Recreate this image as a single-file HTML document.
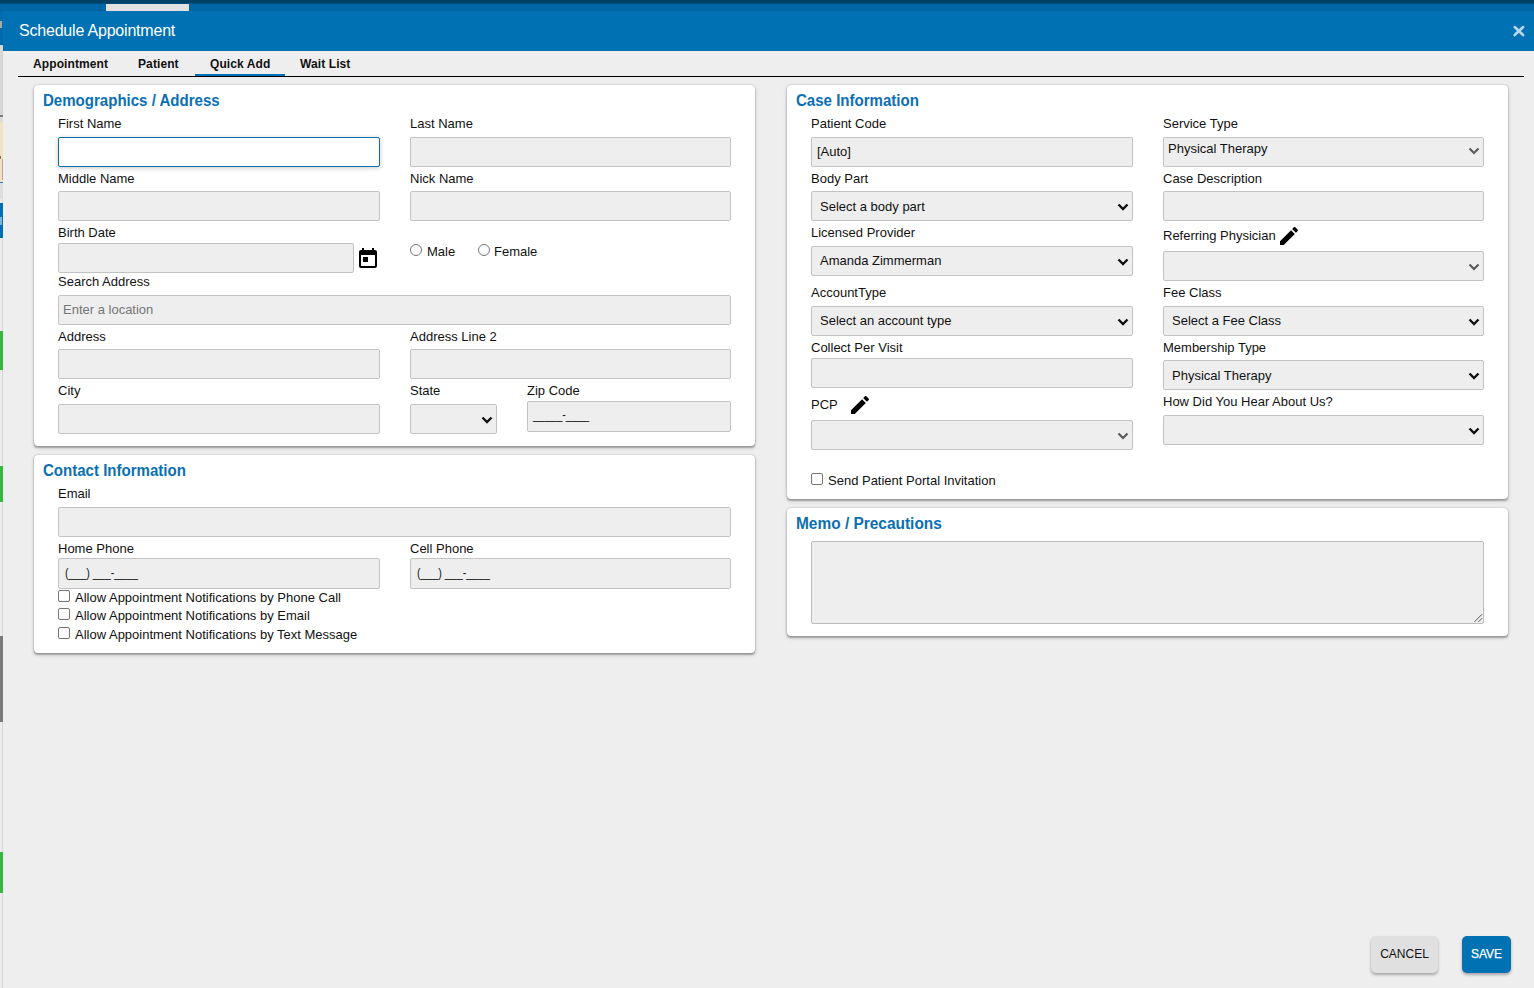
<!DOCTYPE html>
<html><head><meta charset="utf-8">
<style>
*{box-sizing:border-box;margin:0;padding:0}
html,body{width:1534px;height:988px;overflow:hidden;background:#eeeeee;font-family:"Liberation Sans",sans-serif;color:#212121}
.a{position:absolute}
#topbar{left:0;top:0;width:1534px;height:11px;background:linear-gradient(#014166 0,#024367 3px,#0064a2 4.5px,#0068a8 6px,#0067a6 9.5px,#0063a0 10.5px,#0063a0 11px)}
#toptab{left:106px;top:4px;width:83px;height:7px;background:#e2e2e2}
#strip{left:0;top:11px;width:3px;height:977px;background:#dcdcdc}
#hdr{left:3px;top:11px;width:1531px;height:40px;background:#0071b3}
#title{left:19px;top:21px;font-size:16px;color:#fff;line-height:20px;letter-spacing:-0.2px}
#close{left:1511px;top:22px;width:14px;height:16px}
.tab{top:56px;font-size:12px;font-weight:bold;color:#111;line-height:16px;letter-spacing:0.1px}
#tabline{left:18px;top:76px;width:1506px;height:1px;background:#000}
#tabact{left:195px;top:74px;width:90px;height:2px;background:#0071b3}
.panel{background:#fff;border-radius:4px;box-shadow:0 0 1.5px rgba(0,0,0,.36),0 2px 4px rgba(0,0,0,.16),0 2px 1.5px -0.5px rgba(0,0,0,.22)}
.h{font-size:16px;font-weight:bold;color:#0a6fb4;line-height:18px;transform:scaleX(.94);transform-origin:0 0}
.lb{font-size:13px;color:#111;line-height:16px;white-space:nowrap}
.in,.sel{background:#eeeeee;border:1px solid #c3c3c3;border-radius:2px}
.txt{position:absolute;font-size:13px;color:#111;line-height:16px;white-space:nowrap}
.cb{width:12px;height:12px;border:1px solid #767676;border-radius:2px;background:#fff}
.rd{width:12px;height:12px;border:1px solid #767676;border-radius:50%;background:#fff}
.btn{font-size:12px;line-height:16px;text-align:center;border-radius:5px;box-shadow:0 2px 3px rgba(0,0,0,.3)}
</style></head><body>
<div class="a" id="topbar"></div>
<div class="a" id="toptab"></div>
<div class="a" style="left:0;top:11px;width:3px;height:977px;background:#ececec;box-shadow:inset -1px 0 0 #d8d8d8"></div>
<div class="a" style="left:0;top:11px;width:3px;height:34px;background:#006bac"></div>
<div class="a" style="left:0;top:21px;width:2px;height:7px;background:#e6c9a8;opacity:.7"></div>
<div class="a" style="left:0;top:45px;width:3px;height:70px;background:linear-gradient(90deg,#d8d8d8,#d8d8d8 2px,#cccccc 3px)"></div>
<div class="a" style="left:0;top:115px;width:3px;height:2px;background:#7c7c7c"></div>
<div class="a" style="left:0;top:117px;width:3px;height:5px;background:#dcdcdc"></div>
<div class="a" style="left:0;top:122px;width:3px;height:61px;background:#efe3c2"></div>
<div class="a" style="left:2px;top:159px;width:1px;height:21px;background:#d39b9b"></div>
<div class="a" style="left:0;top:156px;width:1px;height:3px;background:#8a6a50"></div>
<div class="a" style="left:0;top:182px;width:3px;height:1px;background:#2f78c0"></div>
<div class="a" style="left:0;top:183px;width:3px;height:16px;background:#dedede"></div>
<div class="a" style="left:0;top:203px;width:3px;height:35px;background:#0070b3"></div>
<div class="a" style="left:0;top:217px;width:2px;height:8px;background:#cfe3f0;opacity:.6"></div>
<div class="a" style="left:0;top:331px;width:3px;height:39px;background:#36b83c"></div>
<div class="a" style="left:0;top:466px;width:3px;height:36px;background:#36b83c"></div>
<div class="a" style="left:0;top:636px;width:3px;height:86px;background:#7a7a7a"></div>
<div class="a" style="left:0;top:852px;width:3px;height:41px;background:#36b83c"></div>
<div class="a" id="hdr"></div>
<div class="a" id="title">Schedule Appointment</div>
<svg class="a" style="left:1512px;top:24px;width:14px;height:14px" viewBox="0 0 14 14"><path d="M2.7 3.1L11.1 11.1M11.1 3.1L2.7 11.1" stroke="#b7d6ea" stroke-width="2.7" stroke-linecap="round"/></svg>
<div class="a tab" style="left:33px">Appointment</div>
<div class="a tab" style="left:138px">Patient</div>
<div class="a tab" style="left:210px">Quick Add</div>
<div class="a tab" style="left:300px">Wait List</div>
<div class="a" id="tabline"></div>
<div class="a" id="tabact"></div>
<div class="a panel" style="left:34px;top:85px;width:721px;height:361px"></div>
<div class="a h" style="left:43px;top:92px">Demographics / Address</div>
<div class="a panel" style="left:34px;top:455px;width:721px;height:198px"></div>
<div class="a h" style="left:43px;top:462px">Contact Information</div>
<div class="a panel" style="left:787px;top:85px;width:721px;height:414px"></div>
<div class="a h" style="left:796px;top:92px">Case Information</div>
<div class="a panel" style="left:787px;top:508px;width:721px;height:128px"></div>
<div class="a h" style="left:796px;top:515px;transform:scaleX(.965)">Memo / Precautions</div>
<div class="a lb" style="left:58px;top:116px;">First Name</div>
<div class="a lb" style="left:410px;top:116px;">Last Name</div>
<div class="a" style="left:58px;top:137px;width:322px;height:30px;background:#fff;border:1px solid #0a6fb0;border-radius:2px;box-shadow:0 1px 5px rgba(0,0,0,.22)"></div>
<div class="a in" style="left:410px;top:137px;width:321px;height:30px;"></div>
<div class="a lb" style="left:58px;top:171px;">Middle Name</div>
<div class="a lb" style="left:410px;top:171px;">Nick Name</div>
<div class="a in" style="left:58px;top:191px;width:322px;height:30px;"></div>
<div class="a in" style="left:410px;top:191px;width:321px;height:30px;"></div>
<div class="a lb" style="left:58px;top:225px;">Birth Date</div>
<div class="a in" style="left:58px;top:243px;width:296px;height:30px;"></div>
<svg class="a" style="left:356px;top:247px;width:24px;height:24px" viewBox="0 0 24 24"><path d="M19 3h-1V1h-2v2H8V1H6v2H5c-1.11 0-1.99.9-1.99 2L3 19c0 1.1.89 2 2 2h14c1.1 0 2-.9 2-2V5c0-1.1-.9-2-2-2zm0 16H5V8h14v11zM7 10h5v5H7z" fill="#000"/></svg>
<div class="a rd" style="left:410px;top:244px"></div>
<div class="a lb" style="left:427px;top:244px;">Male</div>
<div class="a rd" style="left:478px;top:244px"></div>
<div class="a lb" style="left:494px;top:244px;">Female</div>
<div class="a lb" style="left:58px;top:274px;">Search Address</div>
<div class="a in" style="left:58px;top:295px;width:673px;height:30px;"><div class="txt" style="left:4px;top:6px;color:#757575">Enter a location</div></div>
<div class="a lb" style="left:58px;top:329px;">Address</div>
<div class="a lb" style="left:410px;top:329px;">Address Line 2</div>
<div class="a in" style="left:58px;top:349px;width:322px;height:30px;"></div>
<div class="a in" style="left:410px;top:349px;width:321px;height:30px;"></div>
<div class="a lb" style="left:58px;top:383px;">City</div>
<div class="a lb" style="left:410px;top:383px;">State</div>
<div class="a lb" style="left:527px;top:383px;">Zip Code</div>
<div class="a in" style="left:58px;top:404px;width:322px;height:30px;"></div>
<div class="a sel" style="left:410px;top:404px;width:87px;height:30px"><svg class="chev" viewBox="0 0 12 8" style="position:absolute;right:3px;top:11px;width:12px;height:8px"><path d="M1.5 1.5L6 6L10.5 1.5" fill="none" stroke="#111" stroke-width="2.4"/></svg></div>
<div class="a in" style="left:527px;top:401px;width:204px;height:31px;"><div class="txt" style="left:5px;top:5px;color:#111"><span style="display:inline-block;transform:scaleX(.81);transform-origin:0 0">_____-____</span></div></div>
<div class="a lb" style="left:58px;top:486px;">Email</div>
<div class="a in" style="left:58px;top:507px;width:673px;height:30px;"></div>
<div class="a lb" style="left:58px;top:541px;">Home Phone</div>
<div class="a lb" style="left:410px;top:541px;">Cell Phone</div>
<div class="a in" style="left:58px;top:558px;width:322px;height:31px;"><div class="txt" style="left:6px;top:6px;color:#111"><span style="display:inline-block;transform:scaleX(.82);transform-origin:0 0">(___) ___-____</span></div></div>
<div class="a in" style="left:410px;top:558px;width:321px;height:31px;"><div class="txt" style="left:6px;top:6px;color:#111"><span style="display:inline-block;transform:scaleX(.82);transform-origin:0 0">(___) ___-____</span></div></div>
<div class="a cb" style="left:58px;top:590px"></div>
<div class="a lb" style="left:75px;top:590px;">Allow Appointment Notifications by Phone Call</div>
<div class="a cb" style="left:58px;top:608px"></div>
<div class="a lb" style="left:75px;top:608px;">Allow Appointment Notifications by Email</div>
<div class="a cb" style="left:58px;top:627px"></div>
<div class="a lb" style="left:75px;top:627px;">Allow Appointment Notifications by Text Message</div>
<div class="a lb" style="left:811px;top:116px;">Patient Code</div>
<div class="a lb" style="left:1163px;top:116px;">Service Type</div>
<div class="a in" style="left:811px;top:137px;width:322px;height:30px;"><div class="txt" style="left:5px;top:6px;color:#111">[Auto]</div></div>
<div class="a sel" style="left:1163px;top:137px;width:321px;height:30px"><div class="txt" style="left:4px;top:3px">Physical Therapy</div><svg class="chev" viewBox="0 0 12 8" style="position:absolute;right:3px;top:9px;width:12px;height:8px"><path d="M1.5 1.5L6 6L10.5 1.5" fill="none" stroke="#5a5a5a" stroke-width="2.1"/></svg></div>
<div class="a lb" style="left:811px;top:171px;">Body Part</div>
<div class="a lb" style="left:1163px;top:171px;">Case Description</div>
<div class="a sel" style="left:811px;top:191px;width:322px;height:30px"><div class="txt" style="left:8px;top:7px">Select a body part</div><svg class="chev" viewBox="0 0 12 8" style="position:absolute;right:3px;top:11px;width:12px;height:8px"><path d="M1.5 1.5L6 6L10.5 1.5" fill="none" stroke="#111" stroke-width="2.4"/></svg></div>
<div class="a in" style="left:1163px;top:191px;width:321px;height:30px;"></div>
<div class="a lb" style="left:811px;top:225px;">Licensed Provider</div>
<div class="a lb" style="left:1163px;top:228px;">Referring Physician</div>
<svg class="a" style="left:1277px;top:224px;width:24px;height:24px" viewBox="0 0 24 24"><path d="M3 17.25V21h3.75L17.81 9.94l-3.75-3.75L3 17.25zM20.71 7.04c.39-.39.39-1.02 0-1.41l-2.34-2.34c-.39-.39-1.02-.39-1.41 0l-1.83 1.83 3.75 3.75 1.83-1.83z" fill="#000"/></svg>
<div class="a sel" style="left:811px;top:246px;width:322px;height:30px"><div class="txt" style="left:8px;top:6px">Amanda Zimmerman</div><svg class="chev" viewBox="0 0 12 8" style="position:absolute;right:3px;top:11px;width:12px;height:8px"><path d="M1.5 1.5L6 6L10.5 1.5" fill="none" stroke="#111" stroke-width="2.4"/></svg></div>
<div class="a sel" style="left:1163px;top:251px;width:321px;height:30px"><svg class="chev" viewBox="0 0 12 8" style="position:absolute;right:3px;top:11px;width:12px;height:8px"><path d="M1.5 1.5L6 6L10.5 1.5" fill="none" stroke="#5a5a5a" stroke-width="2.1"/></svg></div>
<div class="a lb" style="left:811px;top:285px;">AccountType</div>
<div class="a lb" style="left:1163px;top:285px;">Fee Class</div>
<div class="a sel" style="left:811px;top:306px;width:322px;height:30px"><div class="txt" style="left:8px;top:6px">Select an account type</div><svg class="chev" viewBox="0 0 12 8" style="position:absolute;right:3px;top:11px;width:12px;height:8px"><path d="M1.5 1.5L6 6L10.5 1.5" fill="none" stroke="#111" stroke-width="2.4"/></svg></div>
<div class="a sel" style="left:1163px;top:306px;width:321px;height:30px"><div class="txt" style="left:8px;top:6px">Select a Fee Class</div><svg class="chev" viewBox="0 0 12 8" style="position:absolute;right:3px;top:11px;width:12px;height:8px"><path d="M1.5 1.5L6 6L10.5 1.5" fill="none" stroke="#111" stroke-width="2.4"/></svg></div>
<div class="a lb" style="left:811px;top:340px;">Collect Per Visit</div>
<div class="a lb" style="left:1163px;top:340px;">Membership Type</div>
<div class="a in" style="left:811px;top:358px;width:322px;height:30px;"></div>
<div class="a sel" style="left:1163px;top:360px;width:321px;height:30px"><div class="txt" style="left:8px;top:7px">Physical Therapy</div><svg class="chev" viewBox="0 0 12 8" style="position:absolute;right:3px;top:11px;width:12px;height:8px"><path d="M1.5 1.5L6 6L10.5 1.5" fill="none" stroke="#111" stroke-width="2.4"/></svg></div>
<div class="a lb" style="left:811px;top:397px;">PCP</div>
<div class="a lb" style="left:1163px;top:394px;">How Did You Hear About Us?</div>
<svg class="a" style="left:848px;top:393px;width:24px;height:24px" viewBox="0 0 24 24"><path d="M3 17.25V21h3.75L17.81 9.94l-3.75-3.75L3 17.25zM20.71 7.04c.39-.39.39-1.02 0-1.41l-2.34-2.34c-.39-.39-1.02-.39-1.41 0l-1.83 1.83 3.75 3.75 1.83-1.83z" fill="#000"/></svg>
<div class="a sel" style="left:811px;top:420px;width:322px;height:30px"><svg class="chev" viewBox="0 0 12 8" style="position:absolute;right:3px;top:11px;width:12px;height:8px"><path d="M1.5 1.5L6 6L10.5 1.5" fill="none" stroke="#5a5a5a" stroke-width="2.1"/></svg></div>
<div class="a sel" style="left:1163px;top:415px;width:321px;height:30px"><svg class="chev" viewBox="0 0 12 8" style="position:absolute;right:3px;top:11px;width:12px;height:8px"><path d="M1.5 1.5L6 6L10.5 1.5" fill="none" stroke="#111" stroke-width="2.4"/></svg></div>
<div class="a cb" style="left:811px;top:473px"></div>
<div class="a lb" style="left:828px;top:473px;">Send Patient Portal Invitation</div>
<div class="a" style="left:811px;top:541px;width:673px;height:83px;background:#eeeeee;border:1px solid #bdbdbd;border-radius:2px"></div>
<svg class="a" style="left:1472px;top:612px;width:12px;height:12px" viewBox="0 0 12 12"><path d="M9.8 2.5L2.8 9.5M9.8 6.5L6.8 9.5" stroke="#555" stroke-width="1" stroke-linecap="round"/></svg>
<div class="a btn" style="left:1371px;top:936px;width:67px;height:37px;background:#e0e0e0;color:#111;padding-top:10px">CANCEL</div>
<div class="a btn" style="left:1462px;top:936px;width:49px;height:37px;background:#0071b3;color:#fff;padding-top:10px;-webkit-text-stroke:0.25px #fff">SAVE</div>
</body></html>
